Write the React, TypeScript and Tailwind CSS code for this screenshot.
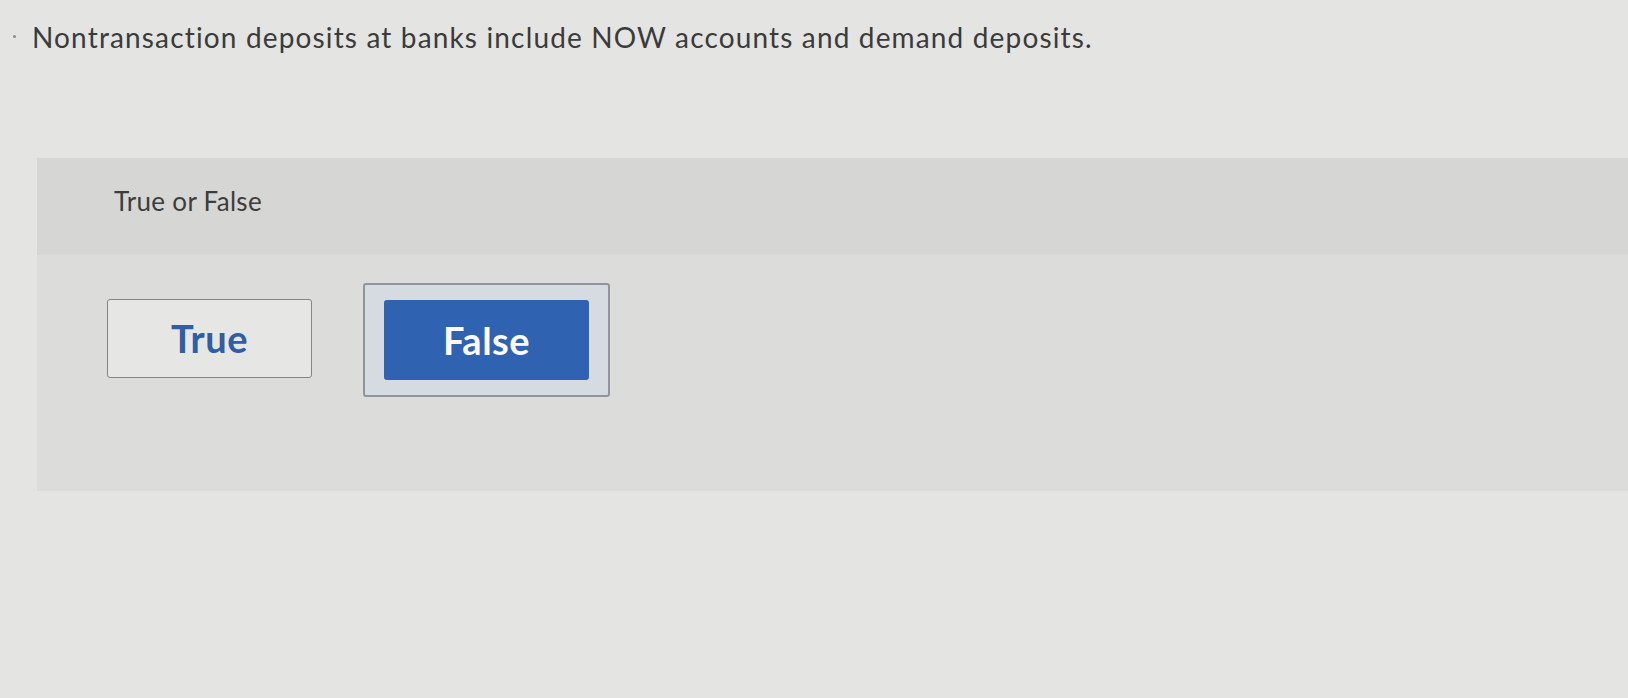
import React, { useState } from 'react';

type Choice = 'true' | 'false';

const App: React.FC = () => {
  const [choice, setChoice] = useState<Choice>('false');

  return (
    <div className="w-[1628px] h-[698px] bg-[#e4e4e2] overflow-hidden font-['Lato',_'Open_Sans',_sans-serif] text-[#3a3a3a]">
      <div className="flex items-start pt-[20px] pl-[13px]">
        <span className="mt-[15px] mr-[16px] w-[3px] h-[3px] rounded-full bg-[#8a8a8a]" />
        <p className="text-[28px] leading-[34px] tracking-[1.15px] text-[#3b3b3b]">
          Nontransaction deposits at banks include NOW accounts and demand deposits.
        </p>
      </div>

      <div className="ml-[37px] mt-[104px] flex flex-col">
        <div className="h-[97px] bg-[#d6d6d4] pl-[77px] pt-[27px]">
          <span className="text-[26px] leading-[32px] tracking-[0.3px] text-[#3d3d3d]">True or False</span>
        </div>
        <div className="h-[236px] bg-[#dcdcda] pl-[70px] pt-[28px] flex items-start gap-[51px]">
          <button
            onClick={() => setChoice('true')}
            className="mt-[16px] w-[205px] h-[79px] border border-[#858585] rounded-[3px] bg-[#e6e6e4] text-[#2f5ea6] text-[38px] tracking-[0.5px] font-bold flex items-center justify-center"
          >
            True
          </button>
          <div
            className={
              choice === 'false'
                ? 'w-[247px] h-[114px] border-[2px] border-[#8f959c] rounded-[3px] bg-[#d5dbe1] flex items-center justify-center'
                : 'w-[247px] h-[114px] flex items-center justify-center'
            }
          >
            <button
              onClick={() => setChoice('false')}
              className="w-[205px] h-[80px] rounded-[3px] bg-[#2f62b0] text-white text-[38px] tracking-[0.5px] font-bold flex items-center justify-center"
            >
              False
            </button>
          </div>
        </div>
      </div>
    </div>
  );
};

export default App;
